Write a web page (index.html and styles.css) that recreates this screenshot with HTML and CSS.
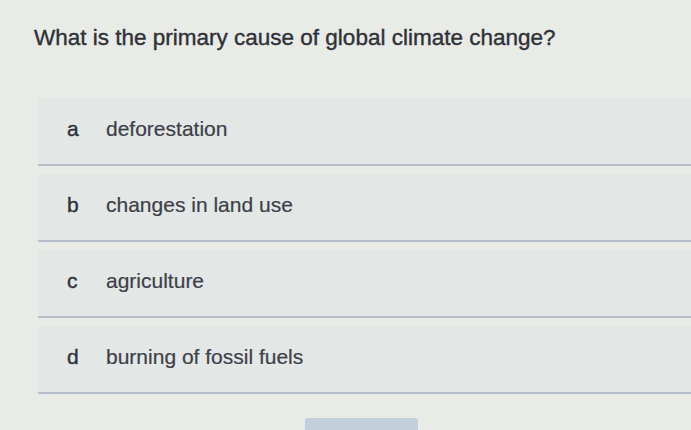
FILE: index.html
```html
<!DOCTYPE html>
<html lang="en">
<head>
<meta charset="utf-8">
<title>Quiz</title>
<link rel="stylesheet" href="styles.css">
</head>
<body>
<main class="quiz">
  <h1 class="question">What is the primary cause of global climate change?</h1>
  <ul class="options">
    <li class="option"><span class="letter">a</span><span class="answer">deforestation</span></li>
    <li class="option"><span class="letter">b</span><span class="answer">changes in land use</span></li>
    <li class="option"><span class="letter">c</span><span class="answer">agriculture</span></li>
    <li class="option"><span class="letter">d</span><span class="answer">burning of fossil fuels</span></li>
  </ul>
  <button class="submit" type="button"></button>
</main>
</body>
</html>
```
FILE: styles.css
```css
html, body {
  margin: 0;
  padding: 0;
  height: 100%;
  overflow: hidden;
}
body {
  background: #e9ebe6;
  font-family: "Liberation Sans", Arial, sans-serif;
  color: #3b3e45;
}
.quiz {
  display: flex;
  flex-direction: column;
  padding-top: 25px;
}
.question {
  margin: 0 0 47px 34px;
  font-size: 22.5px;
  line-height: 26px;
  font-weight: 400;
  color: #2f3239;
  -webkit-text-stroke: 0.4px #2f3239;
}
.options {
  list-style: none;
  margin: 0;
  padding: 0;
  display: flex;
  flex-direction: column;
  gap: 8px;
}
.option {
  margin-left: 38px;
  height: 62px;
  background: #e3e7e6;
  border-bottom: 2px solid #b8bdca;
  display: flex;
  align-items: center;
  padding-left: 29px;
  padding-bottom: 4px;
  box-sizing: content-box;
  font-size: 21px;
  line-height: 24px;
}
.letter {
  width: 39px;
  flex: none;
  color: #30333a;
  -webkit-text-stroke: 0.4px #30333a;
}
.answer {
  color: #3d4048;
  -webkit-text-stroke: 0.2px #3d4048;
}
.submit {
  margin: 24px 0 0 305px;
  width: 113px;
  height: 24px;
  border: none;
  border-radius: 3px;
  background: #c3cfdb;
  padding: 0;
}
```
